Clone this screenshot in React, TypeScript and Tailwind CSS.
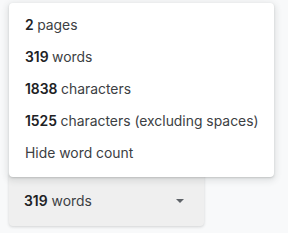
import React from "react";

const items: { n?: string; label: string }[] = [
  { n: "2", label: "pages" },
  { n: "319", label: "words" },
  { n: "1838", label: "characters" },
  { n: "1525", label: "characters (excluding spaces)" },
  { label: "Hide word count" },
];

export default function App() {
  return (
    <div
      className="relative w-[288px] h-[233px] overflow-hidden bg-[#f8f9fa] text-[13.9px] text-[#3c4043]"
      style={{ fontFamily: "Inter, Roboto, 'Liberation Sans', sans-serif" }}
    >
      <div className="pt-[172px] pl-[9px]">
        <div className="w-[195px] h-[54px] pt-[4px] flex items-center justify-between pl-[15px] pr-[20px] rounded-[4px] bg-[#efefef] shadow-[0_1px_3px_rgba(60,64,67,0.2)]">
          <span>
            <span className="font-semibold text-[#202124]">319</span> words
          </span>
          <svg width="8" height="4" viewBox="0 0 8 4">
            <path d="M0 0h8L4 4z" fill="#5f6368" />
          </svg>
        </div>
      </div>

      <div className="absolute left-[9px] top-[3px] w-[265px] h-[174px] pt-[6px] pb-[8px] rounded-[4px] bg-white shadow-[0_2px_6px_2px_rgba(60,64,67,0.12),0_1px_2px_rgba(60,64,67,0.2)]">
        {items.map((it) => (
          <div key={it.label} className="h-[32px] flex items-center pl-[16px]">
            <span>
              {it.n && <span className="font-semibold text-[#202124]">{it.n} </span>}
              {it.label}
            </span>
          </div>
        ))}
      </div>
    </div>
  );
}
